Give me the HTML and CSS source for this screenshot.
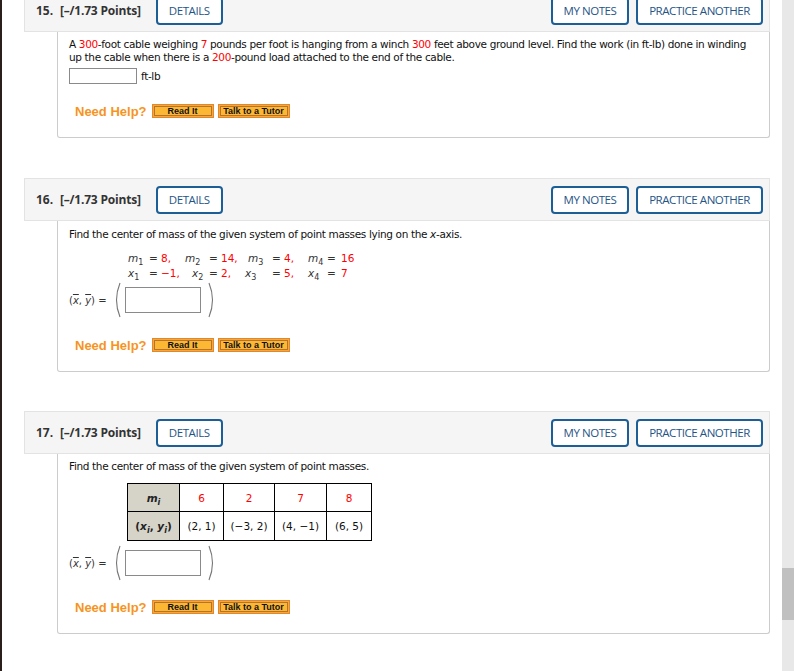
FILE: index.html
```html
<!DOCTYPE html>
<html>
<head>
<meta charset="utf-8">
<link rel="stylesheet" href="styles.css">
</head>
<body>
<div class="page">
  <div class="edge"></div>
  <main class="main">
    <section class="q q-first">
      <div class="qhead">
        <span class="qnum">15.</span>
        <span class="qpts">[–/1.73 Points]</span>
        <button class="btn btn-details">DETAILS</button>
        <span class="spacer"></span>
        <button class="btn btn-notes">MY NOTES</button>
        <button class="btn btn-practice">PRACTICE ANOTHER</button>
      </div>
      <div class="qbody qbody-15">
        <p class="qtext">A <span class="red">300</span>-foot cable weighing <span class="red">7</span> pounds per foot is hanging from a winch <span class="red">300</span> feet above ground level. Find the work (in ft-lb) done in winding<br>up the cable when there is a <span class="red">200</span>-pound load attached to the end of the cable.</p>
        <div class="answer-row">
          <span class="inbox inbox-small"></span><span class="unit">ft-lb</span>
        </div>
        <div class="help">
          <span class="help-label">Need Help?</span>
          <span class="hbtn hbtn-read">Read It</span>
          <span class="hbtn hbtn-tutor">Talk to a Tutor</span>
        </div>
      </div>
    </section>

    <section class="q">
      <div class="qhead">
        <span class="qnum">16.</span>
        <span class="qpts">[–/1.73 Points]</span>
        <button class="btn btn-details">DETAILS</button>
        <span class="spacer"></span>
        <button class="btn btn-notes">MY NOTES</button>
        <button class="btn btn-practice">PRACTICE ANOTHER</button>
      </div>
      <div class="qbody qbody-16">
        <p class="qtext">Find the center of mass of the given system of point masses lying on the <i>x</i>-axis.</p>
        <div class="mathgrid">
          <span class="v"><i>m</i><sub>1</sub></span><span class="eq">=</span><span class="val red">8,</span>
          <span class="v"><i>m</i><sub>2</sub></span><span class="eq">=</span><span class="val red">14,</span>
          <span class="v"><i>m</i><sub>3</sub></span><span class="eq">=</span><span class="val red">4,</span>
          <span class="v"><i>m</i><sub>4</sub></span><span class="eq">=</span><span class="val red">16</span>
          <span class="v"><i>x</i><sub>1</sub></span><span class="eq">=</span><span class="val red">−1,</span>
          <span class="v v2"><i>x</i><sub>2</sub></span><span class="eq">=</span><span class="val red">2,</span>
          <span class="v v3"><i>x</i><sub>3</sub></span><span class="eq">=</span><span class="val red">5,</span>
          <span class="v"><i>x</i><sub>4</sub></span><span class="eq">=</span><span class="val red">7</span>
        </div>
        <div class="pair-row">
          <span class="pair-label">(<i class="bar">x</i>, <i class="bar">y</i>) =</span>
          <svg class="paren paren-l" width="8" height="36" viewBox="0 0 8 36"><path d="M7 1 Q0 18 7 35" fill="none" stroke="#777" stroke-width="1.1"/></svg>
          <span class="inbox inbox-pair"></span>
          <svg class="paren paren-r" width="8" height="36" viewBox="0 0 8 36"><path d="M1 1 Q8 18 1 35" fill="none" stroke="#777" stroke-width="1.1"/></svg>
        </div>
        <div class="help">
          <span class="help-label">Need Help?</span>
          <span class="hbtn hbtn-read">Read It</span>
          <span class="hbtn hbtn-tutor">Talk to a Tutor</span>
        </div>
      </div>
    </section>

    <section class="q">
      <div class="qhead qhead-17">
        <span class="qnum">17.</span>
        <span class="qpts">[–/1.73 Points]</span>
        <button class="btn btn-details">DETAILS</button>
        <span class="spacer"></span>
        <button class="btn btn-notes">MY NOTES</button>
        <button class="btn btn-practice">PRACTICE ANOTHER</button>
      </div>
      <div class="qbody qbody-17">
        <p class="qtext">Find the center of mass of the given system of point masses.</p>
        <table class="mtable">
          <tr>
            <th class="c1"><b><i>m<sub>i</sub></i></b></th>
            <td class="red c2">6</td>
            <td class="red c3">2</td>
            <td class="red c4">7</td>
            <td class="red c5">8</td>
          </tr>
          <tr>
            <th class="c1"><b>(<i>x<sub>i</sub></i>, <i>y<sub>i</sub></i>)</b></th>
            <td>(2, 1)</td>
            <td>(−3, 2)</td>
            <td>(4, −1)</td>
            <td>(6, 5)</td>
          </tr>
        </table>
        <div class="pair-row pair-row-17">
          <span class="pair-label">(<i class="bar">x</i>, <i class="bar">y</i>) =</span>
          <svg class="paren paren-l" width="8" height="36" viewBox="0 0 8 36"><path d="M7 1 Q0 18 7 35" fill="none" stroke="#777" stroke-width="1.1"/></svg>
          <span class="inbox inbox-pair"></span>
          <svg class="paren paren-r" width="8" height="36" viewBox="0 0 8 36"><path d="M1 1 Q8 18 1 35" fill="none" stroke="#777" stroke-width="1.1"/></svg>
        </div>
        <div class="help help-17">
          <span class="help-label">Need Help?</span>
          <span class="hbtn hbtn-read">Read It</span>
          <span class="hbtn hbtn-tutor">Talk to a Tutor</span>
        </div>
      </div>
    </section>
  </main>
  <div class="scrollbar"><div class="thumb"></div></div>
</div>
</body>
</html>
```

FILE: styles.css
```css
html, body {
  margin: 0;
  padding: 0;
  background: #ffffff;
  height: 671px;
  overflow: hidden;
}

.page {
  display: flex;
  height: 671px;
}

.edge {
  width: 2px;
  background: #2a1f1a;
  flex: none;
}

.main {
  flex: 1;
  padding: 0 12px 0 22px;
  overflow: hidden;
}

.scrollbar {
  width: 12px;
  flex: none;
  background: #e8e8e8;
  display: flex;
  flex-direction: column;
  padding-top: 568px;
  box-sizing: border-box;
}

.thumb {
  height: 52px;
  background: #c0c0c0;
}

.q-first {
  margin-top: -11px;
}

.q + .q {
  margin-top: 40px;
}

.q + .q + .q {
  margin-top: 39px;
}

.qhead {
  height: 43px;
  box-sizing: border-box;
  background: #f5f5f5;
  border: 1px solid #e3e3e3;
  display: flex;
  align-items: center;
  padding: 0 6px 0 11px;
  font-family: "Open Sans", "Liberation Sans", sans-serif;
}

.qnum {
  font-weight: 700;
  font-size: 12px;
  color: #333;
  width: 24px;
}

.qpts {
  font-weight: 700;
  font-size: 12px;
  color: #333;
  letter-spacing: -0.2px;
  margin-right: 15px;
}

.spacer {
  flex: 1;
}

.btn {
  height: 28px;
  box-sizing: border-box;
  border: 2px solid #1b5f96;
  border-radius: 4px;
  background: #ffffff;
  color: #1f5587;
  font-family: "Open Sans", "Liberation Sans", sans-serif;
  font-size: 11.5px;
  font-weight: 500;
  letter-spacing: -0.45px;
  padding: 0;
  cursor: pointer;
}

.btn-details {
  width: 67px;
}

.btn-notes {
  width: 78px;
  margin-right: 7px;
}

.btn-practice {
  width: 127px;
}

.qbody {
  margin-left: 33px;
  border: 1px solid #cccccc;
  border-top: none;
  border-radius: 0 0 3px 3px;
  background: #ffffff;
  padding: 6px 12px 18px 11px;
  font-family: "DejaVu Sans", Verdana, sans-serif;
  font-size: 10.5px;
  letter-spacing: -0.35px;
  color: #111;
}

.qbody-16 {
  padding-top: 7px;
}

.qtext {
  margin: 0;
  line-height: 13px;
  white-space: nowrap;
}

.red {
  color: #ff0000;
}

.answer-row {
  margin-top: 4px;
  display: flex;
  align-items: center;
  height: 16px;
}

.inbox {
  display: inline-block;
  box-sizing: border-box;
  border: 1px solid #8a8a8a;
  background: #fff;
}

.inbox-small {
  width: 68px;
  height: 16px;
}

.unit {
  margin-left: 4px;
}

.help {
  margin-top: 19px;
  display: flex;
  align-items: center;
  height: 16px;
  padding-left: 6px;
  letter-spacing: 0;
}

.help-17 {
  margin-top: 18px;
}

.help-label {
  font-family: "Liberation Sans", Arial, sans-serif;
  font-weight: 700;
  font-size: 13px;
  color: #f7941d;
  margin-right: 5px;
}

.hbtn {
  display: inline-flex;
  align-items: center;
  justify-content: center;
  height: 14px;
  box-sizing: border-box;
  background: #fdb833;
  border: 1px solid #e0882a;
  box-shadow: inset 0 0 0 1px #f5a640, inset 0 0 0 2px #b97328;
  font-family: "Liberation Sans", Arial, sans-serif;
  font-weight: 700;
  font-size: 9px;
  color: #111;
}

.hbtn-read {
  width: 62px;
  margin-right: 4px;
}

.hbtn-tutor {
  width: 72px;
}

.mathgrid {
  margin-top: 9px;
  margin-left: 59px;
  display: grid;
  grid-template-columns: 21px 10px 26px 24px 10px 29px 24px 10px 26px 19px 12px auto;
  grid-auto-rows: 15px;
  align-items: center;
  color: #333;
  letter-spacing: 0;
}

.mathgrid .val {
  padding-left: 2px;
}

.mathgrid sub, .mtable sub {
  font-size: 8px;
  vertical-align: -3px;
  line-height: 0;
}

.mathgrid .v2 {
  padding-left: 7px;
}

.mathgrid .v3 {
  margin-left: -3px;
}

.pair-row {
  margin-top: 2px;
  height: 36px;
  display: flex;
  align-items: center;
}

.pair-row-17 {
  margin-top: 4px;
}

.pair-label {
  color: #333;
  font-size: 10px;
  letter-spacing: 0;
}

.bar {
  text-decoration: overline;
}

.paren {
  display: block;
}

.paren-l {
  margin: 0 4px 0 6px;
}

.paren-r {
  margin-left: 7px;
}

.inbox-pair {
  width: 76px;
  height: 26px;
}

.mtable {
  margin-top: 10px;
  margin-left: 58px;
  border-collapse: collapse;
  font-size: 10.5px;
  letter-spacing: 0;
}

.mtable th, .mtable td {
  border: 1.5px solid #000;
  text-align: center;
  padding: 0;
}

.mtable tr:first-child th, .mtable tr:first-child td {
  height: 27px;
}

.mtable tr + tr th, .mtable tr + tr td {
  height: 28px;
}

.mtable th {
  background: #d6d3c9;
  color: #222;
}

.c1 { width: 51px; }
.c2 { width: 43px; }
.c3 { width: 50px; }
.c4 { width: 51px; }
.c5 { width: 44px; }
```
